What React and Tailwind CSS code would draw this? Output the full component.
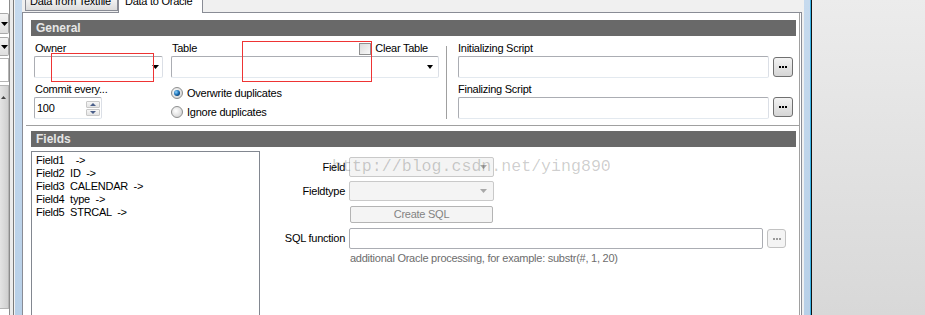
import React from 'react';

const fields = ['Field1    ->', 'Field2  ID  ->', 'Field3  CALENDAR  ->', 'Field4  type  ->', 'Field5  STRCAL  ->'];

function DropArrow({ color = '#000', w = 7 }) {
    return (
        <svg width={w} height="4" viewBox={`0 0 ${w} 4`}>
            <path d={`M0 0h${w}L${w / 2} 4z`} fill={color} />
        </svg>
    );
}

function Dots({ color = '#000' }) {
    return (
        <svg width="8" height="2" viewBox="0 0 8 2">
            <rect x="0" y="0" width="2" height="2" fill={color} />
            <rect x="3" y="0" width="2" height="2" fill={color} />
            <rect x="6" y="0" width="2" height="2" fill={color} />
        </svg>
    );
}

function EllipsisButton({ disabled }) {
    return (
        <div
            className={
                disabled
                    ? 'w-[19px] h-[19px] rounded-[3px] border border-[#c2c2c2] bg-[#f4f4f4] flex items-center justify-center'
                    : 'w-[20px] h-[20px] rounded-[3px] border border-[#707070] bg-gradient-to-b from-[#f3f3f3] to-[#d5d5d5] flex items-center justify-center'
            }
        >
            <Dots color={disabled ? '#9a9a9a' : '#000'} />
        </div>
    );
}

function Radio({ checked }) {
    return (
        <svg width="12" height="12" viewBox="0 0 12 12">
            <defs>
                <radialGradient id={checked ? 'rb1' : 'rb2'} cx="0.4" cy="0.4" r="0.7">
                    <stop offset="0" stopColor="#ffffff" />
                    <stop offset="1" stopColor="#cfcfcf" />
                </radialGradient>
                <radialGradient id="rdot" cx="0.35" cy="0.35" r="0.7">
                    <stop offset="0" stopColor="#8fd3ff" />
                    <stop offset="0.6" stopColor="#1f74b8" />
                    <stop offset="1" stopColor="#0b3f72" />
                </radialGradient>
            </defs>
            <circle cx="6" cy="6" r="5.5" fill={`url(#${checked ? 'rb1' : 'rb2'})`} stroke="#8e8f8f" />
            {checked && <circle cx="6" cy="6" r="3" fill="url(#rdot)" />}
        </svg>
    );
}

function LeftStrip() {
    return (
        <div className="w-[22px] h-full flex shrink-0">
            <div className="w-[9px] h-full bg-white flex flex-col pt-[13px]">
                <div className="h-[21px] border border-l-0 border-[#a9a9a9] rounded-r-[2px] bg-gradient-to-b from-[#f4f4f4] to-[#dedede] flex items-center pl-[1px]">
                    <DropArrow />
                </div>
                <div className="mt-[3px] h-[19px] border border-l-0 border-[#a9a9a9] rounded-r-[2px] bg-gradient-to-b from-[#f4f4f4] to-[#dedede] flex items-center pl-[1px]">
                    <DropArrow />
                </div>
                <div className="mt-[2px] h-[24px] border border-l-0 border-[#b5b5b5] bg-white" />
                <div className="mt-[3px] h-[224px] border border-l-0 border-[#b5b5b5] bg-gradient-to-r from-[#e4e4e4] to-[#cfcfcf] pt-[10px] pl-[1px]">
                    <svg width="5" height="3" viewBox="0 0 5 3"><path d="M0 3L2.5 0L5 3z" fill="#444" /></svg>
                </div>
            </div>
            <div className="w-[1px] h-full bg-[#8c8c8c]" />
            <div className="w-[3px] h-full bg-[#ececec]" />
            <div className="w-[1px] h-full bg-[#7a7a7a]" />
            <div className="w-[1px] h-full bg-[#f2f2f2]" />
            <div className="w-[7px] h-full bg-gradient-to-b from-[#c6daee] to-[#b8d0e8]" />
        </div>
    );
}

function GeneralSection() {
    return (
        <div className="h-[89px] flex">
            <div className="ml-[11px] w-[129px] pt-[6px] flex flex-col">
                <div className="h-[13px] leading-[13px] pl-[1px]">Owner</div>
                <div className="mt-[1px] h-[22px] border border-[#abadb3] border-b-[#e3e9ef] border-r-[#dbdfe6] rounded-[2px] bg-white flex items-center justify-end pr-[3px]">
                    <DropArrow />
                </div>
                <div className="mt-[5px] h-[13px] leading-[13px] pl-[1px]">Commit every...</div>
                <div className="mt-[1px] w-[68px] h-[22px] border border-[#abadb3] border-b-[#e3e9ef] border-r-[#dbdfe6] rounded-[2px] bg-white flex items-center">
                    <span className="pl-[2px] flex-1">100</span>
                    <div className="flex flex-col gap-[1px] mr-[1px]">
                        <div className="w-[14px] h-[7px] border border-[#c8c8c8] rounded-[1px] bg-gradient-to-b from-[#f6f6f6] to-[#e4e4e4] flex items-center justify-center">
                            <svg width="6" height="3" viewBox="0 0 6 3"><path d="M0 3L3 0L6 3z" fill="#4a5f8a" /></svg>
                        </div>
                        <div className="w-[14px] h-[7px] border border-[#c8c8c8] rounded-[1px] bg-gradient-to-b from-[#f6f6f6] to-[#e4e4e4] flex items-center justify-center">
                            <svg width="6" height="3" viewBox="0 0 6 3"><path d="M0 0L3 3L6 0z" fill="#4a5f8a" /></svg>
                        </div>
                    </div>
                </div>
            </div>

            <div className="ml-[8px] w-[268px] pt-[6px] flex flex-col">
                <div className="h-[13px] leading-[13px] flex items-start justify-between pr-[11px]">
                    <span className="pl-[1px]">Table</span>
                    <div className="flex items-center gap-[4px]">
                        <div className="w-[12px] h-[12px] border border-[#8e8f8f] bg-gradient-to-br from-[#dcdcdc] to-[#f8f8f8]" />
                        <span>Clear Table</span>
                    </div>
                </div>
                <div className="mt-[1px] h-[22px] border border-[#abadb3] border-b-[#e3e9ef] border-r-[#dbdfe6] rounded-[2px] bg-white flex items-center justify-end pr-[5px]">
                    <DropArrow w={6} />
                </div>
                <div className="mt-[9px] h-[12px] flex items-center gap-[4px]">
                    <Radio checked />
                    <span className="leading-[13px]">Overwrite duplicates</span>
                </div>
                <div className="mt-[7px] h-[12px] flex items-center gap-[4px]">
                    <Radio />
                    <span className="leading-[13px]">Ignore duplicates</span>
                </div>
            </div>

            <div className="ml-[7px] mt-[10px] w-[1px] h-[73px] bg-[#a0a0a0]" />

            <div className="ml-[11px] pt-[6px] flex flex-col">
                <div className="h-[13px] leading-[13px]">Initializing Script</div>
                <div className="mt-[1px] flex items-start gap-[4px]">
                    <div className="w-[311px] h-[22px] border border-[#abadb3] border-b-[#e3e9ef] border-r-[#dbdfe6] rounded-[2px] bg-white" />
                    <div className="mt-[1px]"><EllipsisButton /></div>
                </div>
                <div className="mt-[5px] h-[13px] leading-[13px]">Finalizing Script</div>
                <div className="mt-[1px] flex items-start gap-[4px]">
                    <div className="w-[311px] h-[22px] border border-[#abadb3] border-b-[#e3e9ef] border-r-[#dbdfe6] rounded-[2px] bg-white" />
                    <EllipsisButton />
                </div>
            </div>
        </div>
    );
}

function FieldsSection() {
    return (
        <div className="mt-[4px] ml-[8px] flex">
            <div className="w-[229px] h-[170px] border border-[#828790] bg-white pt-[2px] pl-[4px]">
                {fields.map((f, i) => (
                    <div key={i} className="h-[13px] leading-[13px] whitespace-pre">{f}</div>
                ))}
            </div>
            <div className="pt-[6px] flex flex-col">
                <div className="h-[20px] flex items-center">
                    <span className="w-[85px] text-right">Field</span>
                    <div className="ml-[4px] w-[145px] h-[20px] border border-[#c9c9c9] rounded-[2px] bg-[#f4f4f4] flex items-center justify-end pr-[6px]">
                        <DropArrow color="#a8a8a8" />
                    </div>
                </div>
                <div className="mt-[4px] h-[20px] flex items-center">
                    <span className="w-[85px] text-right">Fieldtype</span>
                    <div className="ml-[4px] w-[145px] h-[20px] border border-[#c9c9c9] rounded-[2px] bg-[#f4f4f4] flex items-center justify-end pr-[6px]">
                        <DropArrow color="#a8a8a8" />
                    </div>
                </div>
                <div className="mt-[5px] h-[17px] flex">
                    <div className="ml-[90px] w-[143px] h-[17px] border border-[#b4b4b4] rounded-[2px] bg-[#f4f4f4] text-[#838383] flex items-center justify-center leading-[13px]">
                        Create SQL
                    </div>
                </div>
                <div className="mt-[5px] h-[21px] flex items-center">
                    <span className="w-[85px] text-right">SQL function</span>
                    <div className="ml-[4px] w-[414px] h-[21px] border border-[#abadb3] rounded-[2px] bg-white" />
                    <div className="ml-[4px]"><EllipsisButton disabled /></div>
                </div>
                <div className="mt-[3px] ml-[90px] leading-[13px] text-[#6d6d6d]">
                    additional Oracle processing, for example: substr(#, 1, 20)
                </div>
            </div>
        </div>
    );
}

export default function App() {
    return (
        <div className="relative w-[925px] h-[315px] overflow-hidden flex font-['Liberation_Sans',Arial,sans-serif] text-[11px] tracking-[-0.25px] text-black">
            <LeftStrip />

            <div className="w-[782px] h-full shrink-0 bg-[#f0f0f0] flex flex-col">
                <div className="h-[12px] flex pl-[3px] relative z-10">
                    <div className="w-[93px] h-[11px] border border-t-0 border-[#898c95] bg-gradient-to-b from-[#f2f2f2] to-[#dcdcdc] overflow-hidden">
                        <div className="pl-[4px] leading-[13px] -mt-[5px]">Data from Textfile</div>
                    </div>
                    <div className="w-[85px] h-[13px] border border-t-0 border-b-0 border-[#898c95] bg-white overflow-hidden">
                        <div className="pl-[6px] leading-[13px] -mt-[5px]">Data to Oracle</div>
                    </div>
                </div>
                <div className="w-[780px] flex-1 border border-b-0 border-[#898c95] bg-white">
                    <div className="w-[777px] h-full border-r border-[#a0a0a0] flex flex-col">
                        <div className="mt-[7px] ml-[8px] w-[765px] h-[16px] bg-[#696969] text-[#e6e6e6] font-bold text-[12px] tracking-normal leading-[16px] pl-[5px]">
                            General
                        </div>
                        <GeneralSection />
                        <div className="ml-[3px] h-[1px] bg-[#a0a0a0]" />
                        <div className="mt-[5px] ml-[8px] w-[765px] h-[16px] bg-[#696969] text-[#e6e6e6] font-bold text-[12px] tracking-normal leading-[16px] pl-[5px]">
                            Fields
                        </div>
                        <FieldsSection />
                    </div>
                </div>
            </div>

            <div className="w-[6px] h-full bg-gradient-to-b from-[#c6daee] to-[#b8d0e8] shrink-0" />
            <div className="w-[1px] h-full bg-[#3cb4e6] shrink-0" />
            <div className="w-[1px] h-full bg-[#111111] shrink-0" />
            <div className="flex-1 h-full bg-gradient-to-b from-[#ececec] to-[#d8d8d8]" />

            <div className="absolute left-[51px] top-[53px] w-[103px] h-[29px] border border-[#ee3434]" />
            <div className="absolute left-[242px] top-[41px] w-[130px] h-[41px] border border-[#ee3434]" />

            <div className="absolute left-[332px] top-[157px] font-['Liberation_Mono',monospace] text-[16.6px] tracking-normal leading-[20px] text-black/20 whitespace-pre pointer-events-none">
                http://blog.csdn.net/ying890
            </div>
        </div>
    );
}
